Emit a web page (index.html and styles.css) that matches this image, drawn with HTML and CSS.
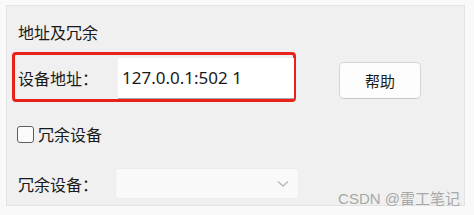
FILE: index.html
```html
<!DOCTYPE html>
<html lang="zh-CN">
<head>
    <meta charset="UTF-8">
    <title>地址及冗余</title>
    <link rel="stylesheet" href="styles.css">
</head>
<body>
    <div class="panel">
        <div class="group-title">地址及冗余</div>

        <div class="address-row">
            <div class="mark">
                <span class="field-label">设备地址：</span>
                <input class="text-input" type="text" value="127.0.0.1:502 1">
            </div>
            <button class="help-btn">帮助</button>
        </div>

        <label class="check-row">
            <span class="check-box"></span>
            <span>冗余设备</span>
        </label>

        <div class="combo-row">
            <span class="field-label">冗余设备：</span>
            <div class="combo">
                <svg class="chevron" width="12" height="8" viewBox="0 0 12 8">
                    <path d="M1 1.5 L6 6 L11 1.5" fill="none" stroke="#b8b8b8" stroke-width="1.4"/>
                </svg>
            </div>
        </div>

        <div class="watermark">CSDN @雷工笔记</div>
    </div>
</body>
</html>
```

FILE: styles.css
```css
body {
    margin: 0;
    background-color: #f9f9f9;
    font-family: "Noto Sans CJK SC", "Noto Sans", sans-serif;
    color: #1a1a1a;
    width: 474px;
    height: 215px;
    overflow: hidden;
}
.panel {
    position: relative;
    margin: 5px 0 0 6px;
    width: 459px;
    height: 201px;
    box-sizing: border-box;
    border: 1px solid #e3e3e3;
    background-color: #f0f0f0;
    padding: 0 0 0 5px;
}
.group-title {
    font-size: 16px;
    line-height: 22px;
    margin: 15px 0 0 6px;
}
.address-row {
    display: flex;
    align-items: flex-end;
    margin-top: 9px;
}
.mark {
    display: flex;
    align-items: center;
    width: 284px;
    height: 50px;
    box-sizing: border-box;
    border: 3px solid #e8221b;
    border-radius: 4px;
    padding: 2px 3px 0 3px;
}
.field-label {
    font-size: 16px;
    width: 97px;
    flex-shrink: 0;
}
.mark .field-label {
    width: 100px;
}
.text-input {
    width: 176px;
    height: 41px;
    box-sizing: border-box;
    border: none;
    border-bottom: 1px solid #a8a8a8;
    background-color: #ffffff;
    font-family: "Noto Sans", sans-serif;
    font-size: 17px;
    color: #1a1a1a;
    padding: 0 4px;
    outline: none;
}
.help-btn {
    margin: 0 0 3px 43px;
    width: 82px;
    height: 37px;
    border: 1px solid #d6d6d6;
    border-bottom-color: #c4c4c4;
    border-radius: 5px;
    background-color: #fdfdfd;
    font-family: "Noto Sans CJK SC", sans-serif;
    font-size: 15px;
    color: #1a1a1a;
}
.check-row {
    display: flex;
    align-items: center;
    gap: 4px;
    margin: 20px 0 0 5px;
    font-size: 16px;
}
.check-box {
    width: 15px;
    height: 15px;
    border: 1px solid #5e5e5e;
    border-radius: 3px;
    background-color: #fbfbfb;
}
.combo-row {
    display: flex;
    align-items: center;
    margin: 22px 0 0 6px;
}
.combo {
    display: flex;
    align-items: center;
    justify-content: flex-end;
    width: 184px;
    height: 31px;
    box-sizing: border-box;
    background-color: #f9f9f9;
    border: 1px solid #ececec;
    border-radius: 3px;
    padding-right: 9px;
}
.watermark {
    position: absolute;
    right: 4px;
    bottom: -3px;
    font-family: "Liberation Sans", "Noto Sans CJK SC", sans-serif;
    font-size: 15px;
    color: #a8a8a8;
}
```
